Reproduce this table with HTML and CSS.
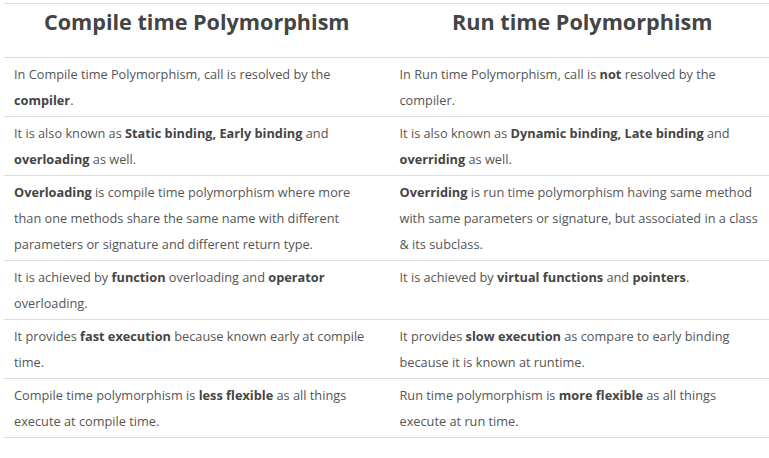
FILE: index.html
```html
<!DOCTYPE html>
<html>
<head>
<meta charset="utf-8">
<link rel="stylesheet" href="styles.css">
</head>
<body>
<div class="wrap">
<table class="cmp">
  <thead>
    <tr>
      <th>Compile time Polymorphism</th>
      <th>Run time Polymorphism</th>
    </tr>
  </thead>
  <tbody>
    <tr>
      <td>In Compile time Polymorphism, call is resolved by the <b>compiler</b>.</td>
      <td>In Run time Polymorphism, call is <b>not</b> resolved by the compiler.</td>
    </tr>
    <tr>
      <td>It is also known as <b>Static binding, Early binding</b> and <b>overloading</b> as well.</td>
      <td>It is also known as <b>Dynamic binding, Late binding</b> and <b>overriding</b> as well.</td>
    </tr>
    <tr>
      <td><b>Overloading</b> is compile time polymorphism where more than one methods share the same name with different parameters or signature and different return type.</td>
      <td><b>Overriding</b> is run time polymorphism having same method with same parameters or signature, but associated in a class &amp; its subclass.</td>
    </tr>
    <tr>
      <td>It is achieved by <b>function</b> overloading and <b>operator</b> overloading.</td>
      <td>It is achieved by <b>virtual functions</b> and <b>pointers</b>.</td>
    </tr>
    <tr>
      <td>It provides <b>fast execution</b> because known early at compile time.</td>
      <td>It provides <b>slow execution</b> as compare to early binding because it is known at runtime.</td>
    </tr>
    <tr>
      <td>Compile time polymorphism is <b>less flexible</b> as all things execute at compile time.</td>
      <td>Run time polymorphism is <b>more flexible</b> as all things execute at run time.</td>
    </tr>
  </tbody>
</table>
</div>
</body>
</html>
```
FILE: styles.css
```css
html, body {
  margin: 0;
  padding: 0;
  background: #fff;
}
.wrap {
  width: 769px;
  height: 458px;
  overflow: hidden;
  padding: 3px 0 0 4px;
  box-sizing: border-box;
}
.cmp {
  width: 771px;
  border-collapse: collapse;
  table-layout: fixed;
  font-family: "Open Sans", "Liberation Sans", sans-serif;
  color: #555;
}
.cmp th {
  width: 50%;
  border-top: 1px solid #ddd;
  border-bottom: 1px solid #ddd;
  font-size: 21.6px;
  font-weight: 700;
  color: #444;
  text-align: center;
  vertical-align: top;
  height: 54px;
  padding: 3px 10px 0;
  box-sizing: border-box;
  line-height: 30px;
}
.cmp td {
  border-bottom: 1px solid #ddd;
  font-size: 12.75px;
  line-height: 26px;
  padding: 3px 10px 3px 10px;
  vertical-align: top;
}
.cmp td b {
  color: #444;
  font-weight: 700;
}
```
